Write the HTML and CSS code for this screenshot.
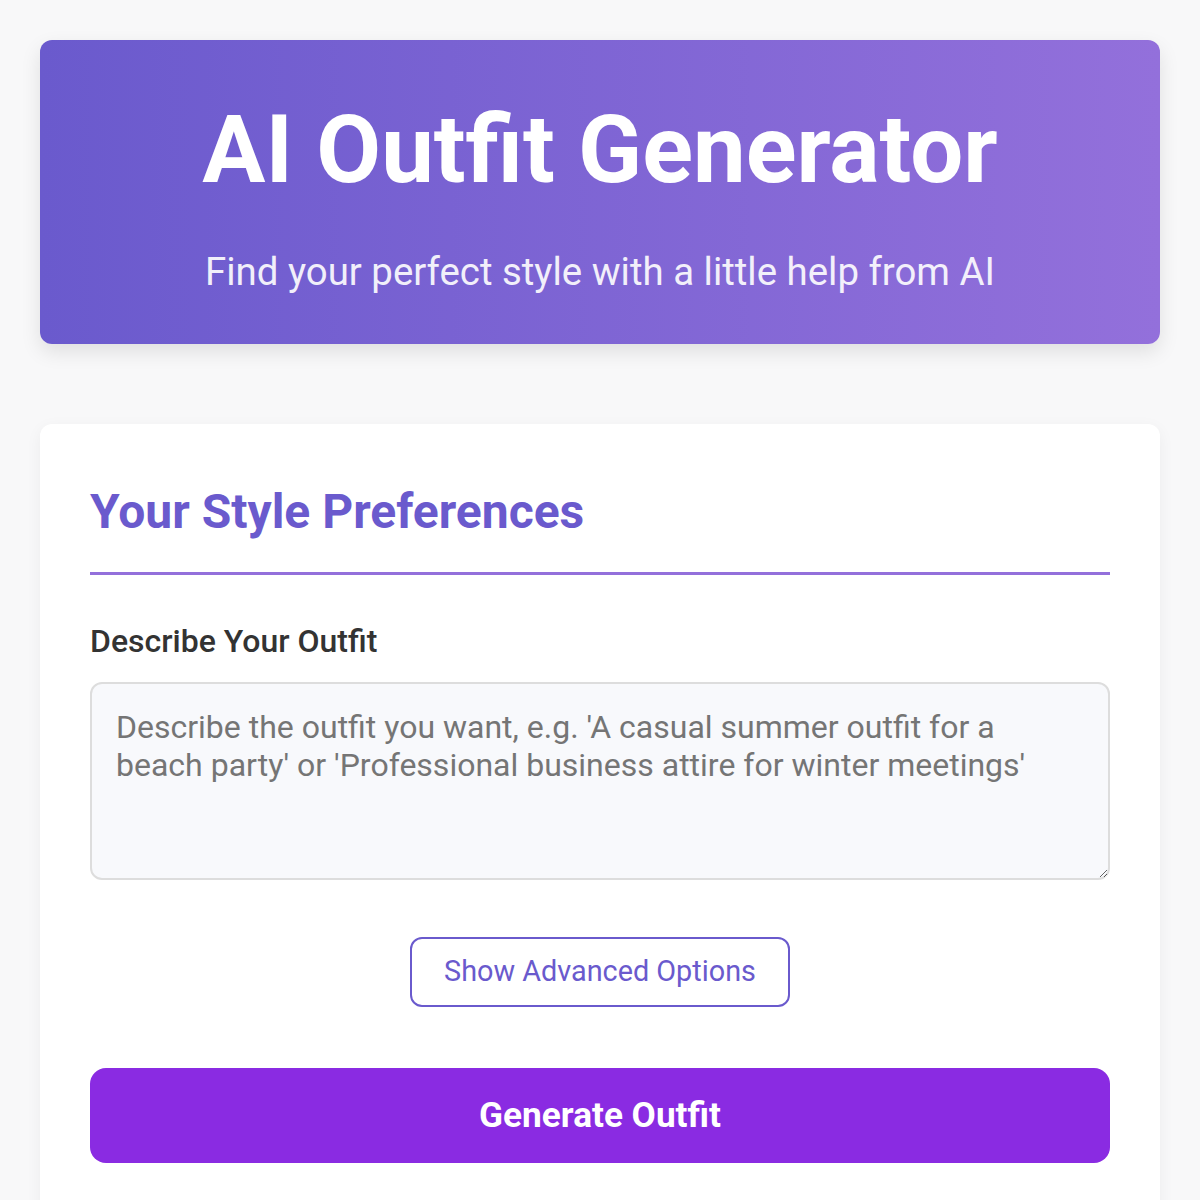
FILE: index.html
```html
<!DOCTYPE html>
<html lang="en">
<head>
<meta charset="utf-8">
<title>AI Outfit Generator</title>
<link rel="stylesheet" href="styles.css">
</head>
<body>
<div class="container">
  <header class="hero">
    <h1 class="hero-title">AI Outfit Generator</h1>
    <p class="hero-sub">Find your perfect style with a little help from AI</p>
  </header>
  <main class="card">
    <h2 class="card-title">Your Style Preferences</h2>
    <label class="field-label" for="desc">Describe Your Outfit</label>
    <textarea id="desc" class="field-textarea" placeholder="Describe the outfit you want, e.g. 'A casual summer outfit for a beach party' or 'Professional business attire for winter meetings'"></textarea>
    <div class="adv-row">
      <button class="btn-outline" type="button">Show Advanced Options</button>
    </div>
    <button class="btn-primary" type="button">Generate Outfit</button>
  </main>
</div>
</body>
</html>
```
FILE: styles.css
```css
* { box-sizing: border-box; }
html, body { margin: 0; padding: 0; }
body {
  background: #f8f8f9;
  font-family: Roboto, "Liberation Sans", sans-serif;
  color: #333;
}
.container {
  padding: 40px 40px 0;
}
.hero {
  background: linear-gradient(90deg, #6a5acd 0%, #9370db 100%);
  border-radius: 12px;
  box-shadow: 0 8px 20px rgba(0, 0, 0, 0.1);
  padding: 54px 40px 49px;
  text-align: center;
  color: #fff;
}
.hero-title {
  margin: 0;
  font-size: 94px;
  line-height: 1.2;
  font-weight: 700;
}
.hero-sub {
  margin: 42px 0 0;
  font-size: 38.4px;
  line-height: 1.2;
  font-weight: 400;
  opacity: 0.9;
}
.card {
  margin-top: 80px;
  background: #fff;
  border-radius: 12px;
  box-shadow: 0 4px 16px rgba(0, 0, 0, 0.05);
  padding: 59px 50px 60px;
  display: flex;
  flex-direction: column;
}
.card-title {
  margin: 0;
  font-size: 48px;
  line-height: 1.2;
  font-weight: 700;
  color: #6a5acd;
  padding-bottom: 32px;
  border-bottom: 3px solid #9370db;
}
.field-label {
  margin-top: 47px;
  font-size: 32px;
  line-height: 1.2;
  font-weight: 500;
  color: #333;
}
.field-textarea {
  margin-top: 21px;
  height: 198px;
  width: 100%;
  border: 2px solid #ddd;
  border-radius: 12px;
  background: #f8f9fc;
  padding: 24px;
  font-family: Roboto, "Liberation Sans", sans-serif;
  font-size: 32px;
  line-height: 1.2;
  color: #333;
}
.field-textarea::placeholder {
  color: #757575;
}
.adv-row {
  margin-top: 57px;
  display: flex;
  justify-content: center;
}
.btn-outline {
  background: #fff;
  border: 2px solid #6a5acd;
  border-radius: 12px;
  color: #6a5acd;
  font-family: Roboto, "Liberation Sans", sans-serif;
  font-size: 28.8px;
  line-height: 1.172;
  padding: 16px 32px;
  white-space: nowrap;
}
.btn-primary {
  margin-top: 61px;
  height: 95px;
  background: #8a2be2;
  border: none;
  border-radius: 16px;
  color: #fff;
  font-family: Roboto, "Liberation Sans", sans-serif;
  font-size: 35.2px;
  font-weight: 700;
}
```
